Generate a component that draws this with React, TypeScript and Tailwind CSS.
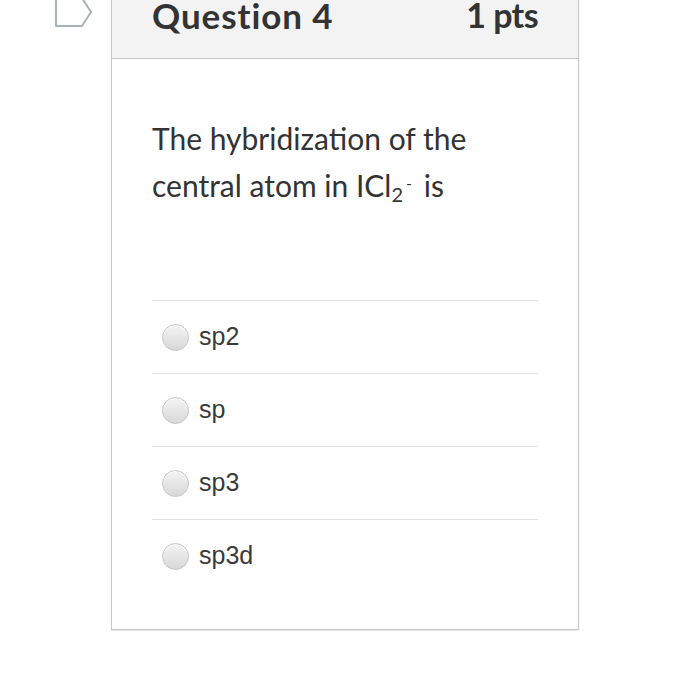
import React from "react";

const options = ["sp2", "sp", "sp3", "sp3d"];

function Radio() {
  return (
    <span className="block h-[27px] w-[27px] shrink-0 rounded-full border border-[#c4c4c4] bg-gradient-to-b from-[#f4f4f4] to-[#d8d8d8] shadow-[inset_0_1px_1px_rgba(255,255,255,0.9)]" />
  );
}

export default function App() {
  return (
    <div className="min-h-[700px] bg-white font-['Lato','Open_Sans',sans-serif] text-[#333]">
      <div className="relative ml-[111px] w-[468px]">
        <svg
          className="absolute left-[-57px] top-[-4px]"
          width="42"
          height="32"
          viewBox="0 0 42 32"
          fill="none"
        >
          <path d="M2 2 H28 L37 16 L28 30 H2 Z" stroke="#a9b1b8" strokeWidth="2" strokeLinejoin="round" />
        </svg>

        <div className="border-x border-b border-[#c6c6c6] shadow-[0_1px_1px_rgba(0,0,0,0.08)]">
          <header className="flex h-[59px] items-start justify-between border-b border-[#c6c6c6] bg-[#f3f3f3] px-[40px]">
            <h2 className="text-[35px] font-bold leading-[30px] tracking-[0.9px]">Question 4</h2>
            <span className="text-[34px] font-bold leading-[30px] tracking-[-0.6px]">1 pts</span>
          </header>

          <div className="px-[40px] pb-[37px] pt-[56px]">
            <p className="text-[30px] leading-[47px]">
              The hybridization of the
              <br />
              central atom in ICl
              <span className="relative">
                <sub className="text-[20px]">2</sub>
                <sup className="ml-[3px] text-[16px]">-</sup>
              </span>{" "}
              <span className="ml-[4px]">is</span>
            </p>

            <ul className="mt-[91px]">
              {options.map((opt) => (
                <li
                  key={opt}
                  className="flex h-[73px] items-center gap-[10px] border-t border-[#e2e2e2] pl-[10px]"
                >
                  <Radio />
                  <span className="font-['Liberation_Sans',Arial,sans-serif] text-[25px] text-[#3a3a3a]">
                    {opt}
                  </span>
                </li>
              ))}
            </ul>
          </div>
        </div>
      </div>
    </div>
  );
}
